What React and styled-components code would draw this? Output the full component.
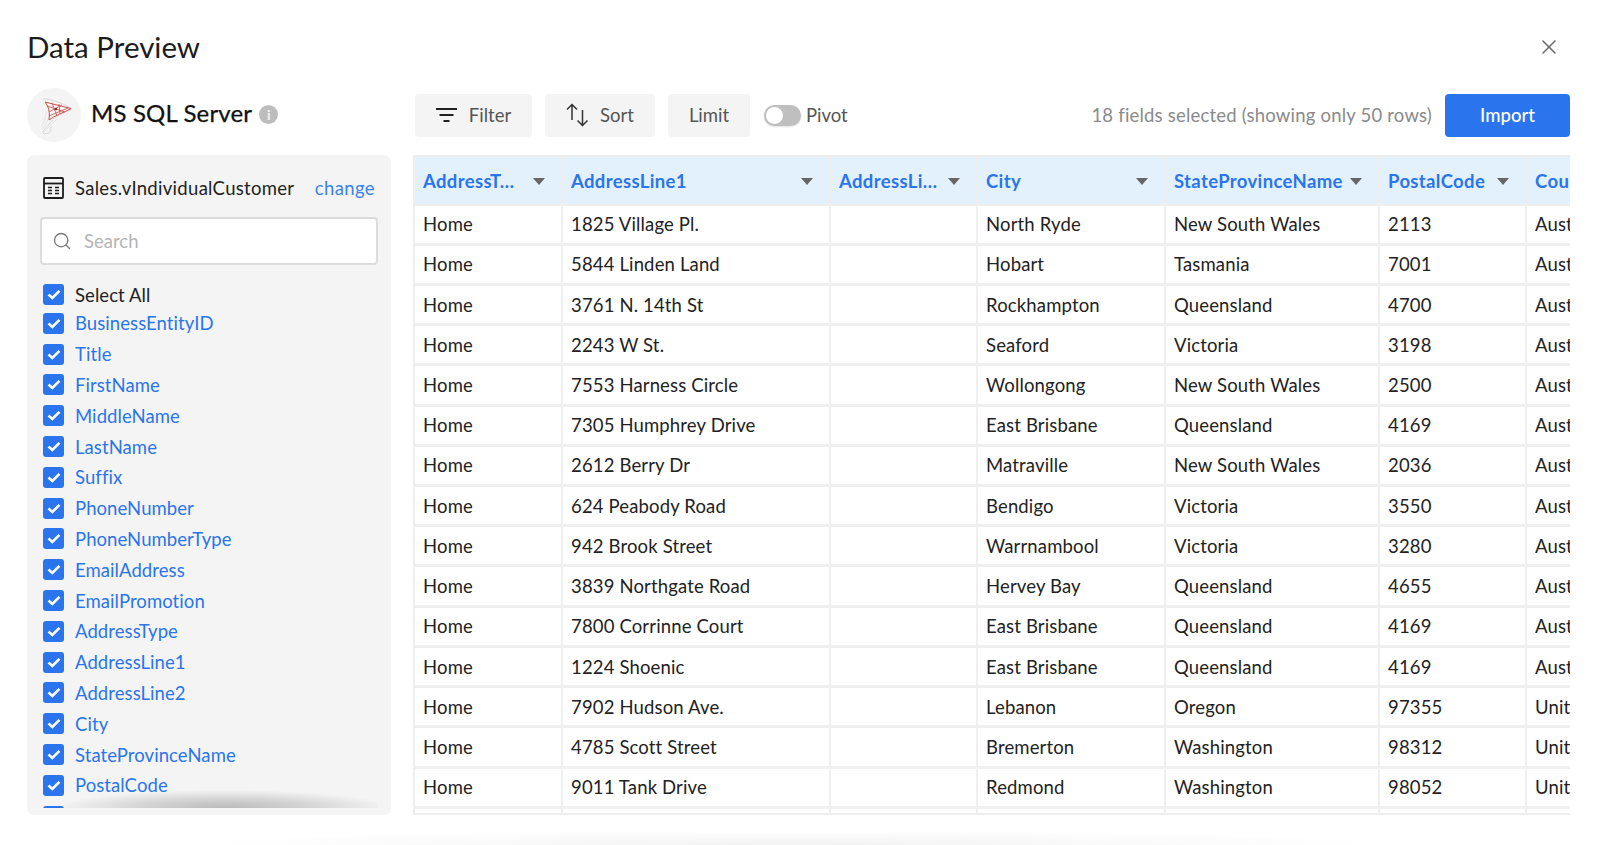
import React from "react";
import styled, { createGlobalStyle } from "styled-components";
import { X, Search } from "lucide-react";

const Global = createGlobalStyle`
  html, body { margin: 0; padding: 0; background: #fff; }
  * { box-sizing: border-box; }
  body { font-family: Lato, "Liberation Sans", sans-serif; color: #222; font-variant-ligatures: none; }
`;

const Page = styled.div`
  width: 1600px;
  height: 845px;
  padding: 0 30px 0 27px;
  overflow: hidden;
  display: flex;
  flex-direction: column;
`;
const Header = styled.header`
  height: 88px;
  padding-top: 6px;
  display: flex;
  align-items: center;
  justify-content: space-between;
  flex: none;
`;
const Title = styled.h1`
  margin: -2px 0 0;
  font-size: 29.5px;
  font-weight: 400;
  color: #1c1c1c;
`;
const Close = styled.button`
  border: 0;
  background: none;
  padding: 0;
  margin-right: 9px;
  color: #666;
  display: flex;
`;
const Body = styled.div`
  display: grid;
  grid-template-columns: 364px 1157px;
  grid-template-rows: 67px 660px;
  column-gap: 22px;
`;
const Source = styled.div`
  display: flex;
  align-items: flex-start;
`;
const LogoCircle = styled.div`
  width: 54px;
  height: 54px;
  border-radius: 50%;
  background: #f4f4f4;
  flex: none;
`;
const SourceName = styled.div`
  margin: 12px 0 0 10px;
  font-size: 24px;
  line-height: 26px;
  color: #111;
  letter-spacing: 0.15px;
  -webkit-text-stroke: 0.25px #111;
`;
const InfoBadge = styled.span`
  width: 19px;
  height: 19px;
  margin: 17px 0 0 7px;
  border-radius: 50%;
  background: #bdbdbd;
  color: #f2f2f2;
  font-size: 14px;
  font-weight: 700;
  line-height: 19px;
  text-align: center;
`;
const Toolbar = styled.div`
  display: flex;
  align-items: flex-start;
  padding: 6px 0 0 2px;
`;
const ToolButton = styled.button`
  height: 43px;
  width: ${(p) => p.$w}px;
  margin-right: ${(p) => p.$gap}px;
  border: 0;
  border-radius: 4px;
  background: #f4f4f4;
  color: #555;
  font: 400 18.5px Lato, sans-serif;
  display: flex;
  align-items: center;
  justify-content: center;
  gap: ${(p) => p.$iconGap || 0}px;
  padding: 0 0 2px;
`;
const PivotWrap = styled.div`
  height: 43px;
  padding-bottom: 1px;
  display: flex;
  align-items: center;
  color: #555;
  font-size: 18.5px;
  gap: 5px;
`;
const Toggle = styled.span`
  width: 37px;
  height: 21px;
  border-radius: 11px;
  background: #bfbfbf;
  box-shadow: 0 1px 2px rgba(0, 0, 0, 0.12);
  padding: 2px;
  display: flex;
`;
const Knob = styled.span`
  width: 17px;
  height: 17px;
  border-radius: 50%;
  background: #fff;
`;
const Status = styled.div`
  margin-left: auto;
  height: 43px;
  line-height: 43px;
  color: #8a8a8a;
  font-size: 18.5px;
  letter-spacing: 0.2px;
`;
const ImportButton = styled.button`
  width: 125px;
  height: 43px;
  margin-left: 13px;
  border: 0;
  border-radius: 4px;
  background: #2a75ee;
  color: #fff;
  padding: 0 0 2px;
  font: 500 18.5px Lato, sans-serif;
`;
const Panel = styled.aside`
  background: #f4f4f4;
  border-radius: 7px;
  padding: 22px 13px 7px;
  display: flex;
  flex-direction: column;
  min-height: 0;
`;
const PanelHead = styled.div`
  height: 22px;
  padding: 0 3px;
  display: flex;
  align-items: center;
  font-size: 18.5px;
  letter-spacing: 0.3px;
  color: #222;
`;
const PanelName = styled.span`
  margin: -1px 0 0 11px;
  flex: 1;
`;
const Change = styled.a`
  color: #3b82f0;
  font-size: 18.5px;
  letter-spacing: 0.4px;
`;
const SearchBox = styled.div`
  height: 48px;
  margin-top: 18px;
  flex: none;
  border: 2px solid #dcdcdc;
  border-radius: 4px;
  background: #fff;
  padding-left: 10px;
  display: flex;
  align-items: center;
  gap: 12px;
  color: #b5b5b5;
  font-size: 18.5px;
`;
const List = styled.div`
  position: relative;
  flex: 1;
  margin-top: 16px;
  overflow: hidden;
`;
const FieldRow = styled.label`
  height: ${(p) => (p.$all ? 27 : 30.8)}px;
  padding-left: 3px;
  display: flex;
  align-items: center;
  gap: 11px;
  font-size: 18.5px;
  letter-spacing: 0.08px;
  color: ${(p) => (p.$all ? "#222" : "#2a75ee")};
`;
const Check = styled.span`
  width: 21px;
  height: 21px;
  flex: none;
  border-radius: 3px;
  background: #2a75ee;
  display: flex;
  align-items: center;
  justify-content: center;
`;
const ListShade = styled.div`
  position: absolute;
  left: 18px;
  right: -13px;
  bottom: -18px;
  height: 36px;
  border-radius: 50%;
  background: radial-gradient(closest-side, rgba(0,0,0,0.24), rgba(0,0,0,0.12) 55%, rgba(0,0,0,0) 100%);
`;
const TableClip = styled.div`
  overflow: hidden;
  border-top: 2px solid #eee;
  border-left: 2px solid #eee;
  border-bottom: 2px solid #eee;
  height: 660px;
`;
const gridCols = "148px 268px 147px 188px 214px 147px 158px";
const HeadRow = styled.div`
  display: grid;
  grid-template-columns: ${gridCols};
  height: 48.5px;
`;
const DataRow = styled.div`
  display: grid;
  grid-template-columns: ${gridCols};
  height: 40.23px;
`;
const Th = styled.div`
  padding: 2px 16px 0 8px;
  background: #e3f1fd;
  border-right: 2px solid #eee;
  border-bottom: 2px solid #eee;
  font-size: 18.5px;
  font-weight: 700;
  letter-spacing: 0.36px;
  color: #2a75ee;
  display: flex;
  align-items: center;
  justify-content: space-between;
  gap: ${(p) => (p.$narrow ? 10 : 4)}px;
`;
const ThLabel = styled.span`
  white-space: nowrap;
  overflow: hidden;
  text-overflow: ellipsis;
`;
const Caret = styled.i`
  flex: none;
  width: 0;
  height: 0;
  border-left: 6px solid transparent;
  border-right: 6px solid transparent;
  border-top: 7px solid #666;
`;
const Td = styled.div`
  padding: 0 0 0 8px;
  background: #fff;
  border-bottom: 3px solid #f0f0f0;
  border-right: 2px solid #f0f0f0;
  font-size: 18.5px;
  letter-spacing: 0.15px;
  color: #222;
  white-space: nowrap;
  overflow: hidden;
  display: flex;
  align-items: center;
`;
const Glow = styled.div`
  height: 30px;
  margin: 15px 180px 0 170px;
  flex: none;
  background: radial-gradient(closest-side, rgba(0,0,0,0.05), rgba(0,0,0,0));
`;

const fields = [
  "BusinessEntityID","Title","FirstName","MiddleName","LastName","Suffix","PhoneNumber","PhoneNumberType",
  "EmailAddress","EmailPromotion","AddressType","AddressLine1","AddressLine2","City","StateProvinceName","PostalCode","Country",
];
const columns = ["AddressType","AddressLine1","AddressLine2","City","StateProvinceName","PostalCode","Country"];
const narrowColumns = ["AddressType", "AddressLine2"];
const rows = [
  ["1825 Village Pl.","North Ryde","New South Wales","2113","Australia"],
  ["5844 Linden Land","Hobart","Tasmania","7001","Australia"],
  ["3761 N. 14th St","Rockhampton","Queensland","4700","Australia"],
  ["2243 W St.","Seaford","Victoria","3198","Australia"],
  ["7553 Harness Circle","Wollongong","New South Wales","2500","Australia"],
  ["7305 Humphrey Drive","East Brisbane","Queensland","4169","Australia"],
  ["2612 Berry Dr","Matraville","New South Wales","2036","Australia"],
  ["624 Peabody Road","Bendigo","Victoria","3550","Australia"],
  ["942 Brook Street","Warrnambool","Victoria","3280","Australia"],
  ["3839 Northgate Road","Hervey Bay","Queensland","4655","Australia"],
  ["7800 Corrinne Court","East Brisbane","Queensland","4169","Australia"],
  ["1224 Shoenic","East Brisbane","Queensland","4169","Australia"],
  ["7902 Hudson Ave.","Lebanon","Oregon","97355","United States"],
  ["4785 Scott Street","Bremerton","Washington","98312","United States"],
  ["9011 Tank Drive","Redmond","Washington","98052","United States"],
];

const Logo = () => (
  <svg width="54" height="54" viewBox="0 0 54 54" fill="none">
    <path d="M16 11C24 11 36 15 45 21C36 25 28 28 24 34C20 40 15 42 16 45C20 47 25 45 24 38" stroke="#d4d4d4" strokeWidth="0.9" />
    <path d="M15 41C19 37 21 32 22 28M17 44C21 40 26 35 31 30M14 38C18 34 19 28 19 23" stroke="#dcdcdc" strokeWidth="0.7" />
    <path d="M18 14L44 20.5C37 25 28 27 22 32C23 25 22 19 18 14Z" stroke="#c9504c" strokeWidth="1" strokeLinejoin="round" />
    <path d="M20 18L38 24M22 24L35 17M25 15L30 28M32 16L33 26M22 28L41 20" stroke="#cc4a46" strokeWidth="0.8" />
    <circle cx="29" cy="21" r="1.2" fill="#8c1f1c" />
  </svg>
);
const TableIcon = () => (
  <svg width="21" height="22" viewBox="0 0 21 22" fill="none" stroke="#1c1c1c">
    <rect x="1" y="1" width="19" height="20" rx="1" strokeWidth="1.8" />
    <path d="M1 6.5H20" strokeWidth="1.8" />
    <path d="M5 10.5H9M12 10.5H16M5 13.5H9M12 13.5H16M5 16.5H9M12 16.5H16" strokeWidth="1.5" />
  </svg>
);
const CheckMark = () => (
  <svg width="14" height="11" viewBox="0 0 14 11" fill="none">
    <path d="M1.5 5.5L5.3 9L12.5 1.8" stroke="#fff" strokeWidth="2.6" />
  </svg>
);
const FilterIcon = () => (
  <svg width="22" height="16" viewBox="0 0 22 16" fill="none" stroke="#222" strokeWidth="2">
    <path d="M0 2H21M3.5 8H17.5M7.5 14H13.5" />
  </svg>
);
const SortIcon = () => (
  <svg width="23" height="24" viewBox="0 0 23 24" fill="none" stroke="#333" strokeWidth="1.5">
    <path d="M6 1.5V17M1 6.5L6 1.5L11 6.5M16.5 7V22.5M11.5 17.5L16.5 22.5L21.5 17.5" />
  </svg>
);

export default function App() {
  return (
    <Page>
      <Global />
      <Header>
        <Title>Data Preview</Title>
        <Close aria-label="Close"><X size={24} strokeWidth={1.5} /></Close>
      </Header>
      <Body>
        <Source>
          <LogoCircle><Logo /></LogoCircle>
          <SourceName>MS SQL Server</SourceName>
          <InfoBadge>i</InfoBadge>
        </Source>
        <Toolbar>
          <ToolButton $w={117} $gap={13} $iconGap={11}><FilterIcon />Filter</ToolButton>
          <ToolButton $w={110} $gap={13} $iconGap={11}><SortIcon />Sort</ToolButton>
          <ToolButton $w={82} $gap={14}>Limit</ToolButton>
          <PivotWrap><Toggle><Knob /></Toggle>Pivot</PivotWrap>
          <Status>18 fields selected (showing only 50 rows)</Status>
          <ImportButton>Import</ImportButton>
        </Toolbar>
        <Panel>
          <PanelHead>
            <TableIcon />
            <PanelName>Sales.vIndividualCustomer</PanelName>
            <Change>change</Change>
          </PanelHead>
          <SearchBox><Search size={20} color="#777" strokeWidth={1.6} />Search</SearchBox>
          <List>
            <FieldRow $all><Check><CheckMark /></Check>Select All</FieldRow>
            {fields.map((f) => (
              <FieldRow key={f}><Check><CheckMark /></Check>{f}</FieldRow>
            ))}
            <ListShade />
          </List>
        </Panel>
        <TableClip role="table">
          <HeadRow role="row">
            {columns.map((n) => (
              <Th key={n} role="columnheader" $narrow={narrowColumns.includes(n)}><ThLabel>{n}</ThLabel><Caret /></Th>
            ))}
          </HeadRow>
          {rows.map((r, i) => (
            <DataRow key={i} role="row">
              <Td>Home</Td>
              <Td>{r[0]}</Td>
              <Td />
              <Td>{r[1]}</Td>
              <Td>{r[2]}</Td>
              <Td>{r[3]}</Td>
              <Td>{r[4]}</Td>
            </DataRow>
          ))}
          <DataRow role="row">
            {columns.map((n) => <Td key={n} />)}
          </DataRow>
        </TableClip>
      </Body>
      <Glow />
    </Page>
  );
}
